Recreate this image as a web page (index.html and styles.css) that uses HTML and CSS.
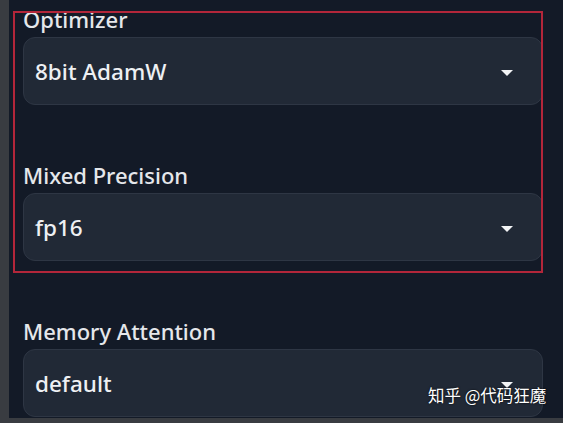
FILE: index.html
```html
<!DOCTYPE html>
<html>
  <head>
    <title>Training Settings</title>
    <link rel="stylesheet" href="styles.css">
  </head>

  <body>
    <div class="panel">
      <div class="field">
        <label class="field-label">Optimizer</label>
        <div class="select">
          <span class="select-value">8bit AdamW</span>
          <span class="arrow"></span>
        </div>
      </div>

      <div class="field">
        <label class="field-label">Mixed Precision</label>
        <div class="select">
          <span class="select-value">fp16</span>
          <span class="arrow"></span>
        </div>
      </div>

      <div class="field">
        <label class="field-label">Memory Attention</label>
        <div class="select">
          <span class="select-value">default</span>
          <span class="arrow"></span>
        </div>
      </div>

      <div class="highlight"></div>
      <div class="watermark">知乎 @代码狂魔</div>
    </div>
  </body>
</html>
```

FILE: styles.css
```css
body {
  margin: 0;
  background-color: #393c41;
  font-family: "Noto Sans", "Noto Sans CJK SC", sans-serif;
  overflow: hidden;
}

.panel {
  position: relative;
  margin-left: 9px;
  height: 418px;
  padding: 0 20px 0 14px;
  background-color: #131a27;
  display: flex;
  flex-direction: column;
  overflow: hidden;
}

.field {
  display: flex;
  flex-direction: column;
  margin-bottom: 53px;
}

.field:first-child {
  margin-top: 2px;
}

.field-label {
  height: 35px;
  font-size: 22px;
  font-weight: 500;
  line-height: 35px;
  color: #e5e7eb;
}

.select {
  display: flex;
  align-items: center;
  justify-content: space-between;
  height: 66px;
  padding: 0 29px 0 11px;
  background-color: #212936;
  border: 1px solid #2e3644;
  border-radius: 12px;
}

.select-value {
  font-size: 22.5px;
  font-weight: 500;
  color: #eef0f3;
}

.arrow {
  width: 0;
  height: 0;
  margin-top: 3px;
  border-left: 6px solid transparent;
  border-right: 6px solid transparent;
  border-top: 6px solid #f3f4f6;
}

.highlight {
  position: absolute;
  left: 4px;
  top: 11px;
  width: 526px;
  height: 258px;
  border: 2px solid #b3263a;
}

.watermark {
  position: absolute;
  left: 419px;
  top: 383px;
  font-size: 16.5px;
  color: #ffffff;
  text-shadow: 0 0 2px #000000;
  font-family: "Noto Sans CJK SC", sans-serif;
}
```
